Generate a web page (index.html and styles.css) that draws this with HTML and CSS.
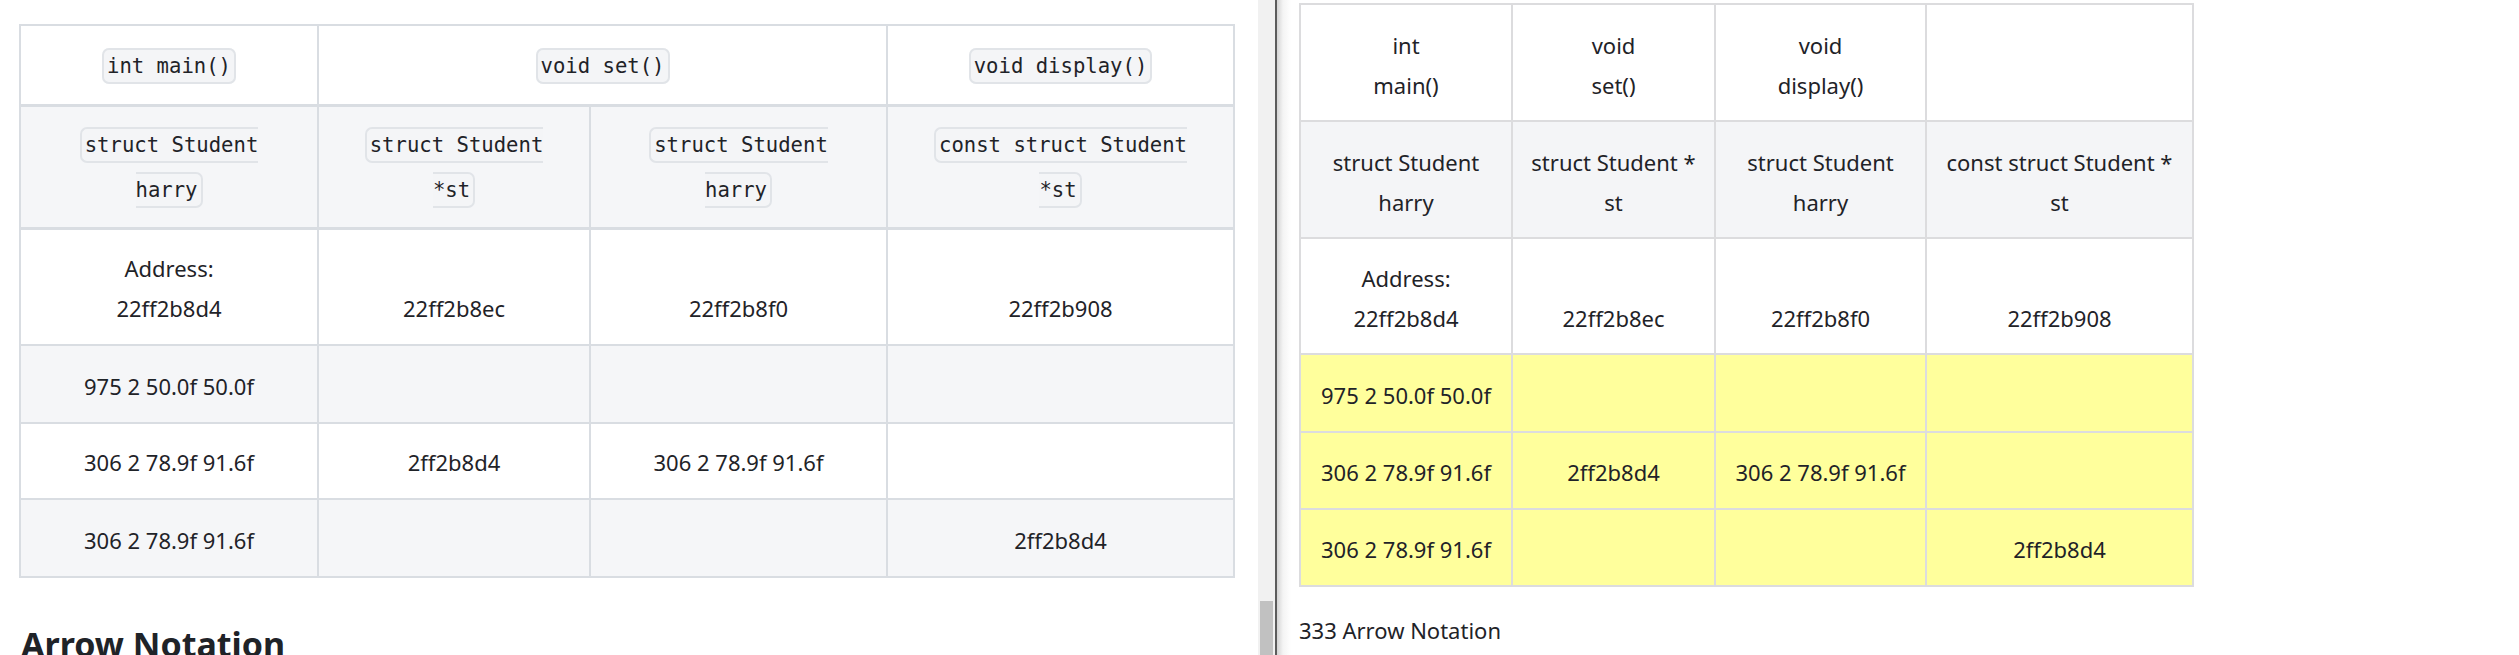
FILE: index.html
```html
<!DOCTYPE html>
<html lang="en">
<head>
<meta charset="utf-8">
<title>Arrow Notation</title>
<link rel="stylesheet" href="styles.css">
</head>
<body>
<div class="app">
  <section class="pane pane-left">
    <table class="md-table">
      <colgroup>
        <col class="lc1"><col class="lc2"><col class="lc3"><col class="lc4">
      </colgroup>
      <tr class="head1">
        <td><code>int main()</code></td>
        <td colspan="2"><code>void set()</code></td>
        <td><code>void display()</code></td>
      </tr>
      <tr class="head2">
        <td><code>struct Student<br>harry</code></td>
        <td><code>struct Student<br>*st</code></td>
        <td><code>struct Student<br>harry</code></td>
        <td><code>const struct Student<br>*st</code></td>
      </tr>
      <tr class="addr">
        <td>Address:<br>22ff2b8d4</td>
        <td>22ff2b8ec</td>
        <td>22ff2b8f0</td>
        <td>22ff2b908</td>
      </tr>
      <tr class="r78">
        <td>975 2 50.0f 50.0f</td>
        <td></td>
        <td></td>
        <td></td>
      </tr>
      <tr class="r76">
        <td>306 2 78.9f 91.6f</td>
        <td>2ff2b8d4</td>
        <td>306 2 78.9f 91.6f</td>
        <td></td>
      </tr>
      <tr class="r78">
        <td>306 2 78.9f 91.6f</td>
        <td></td>
        <td></td>
        <td>2ff2b8d4</td>
      </tr>
    </table>
    <h2 class="heading">Arrow Notation</h2>
  </section>

  <div class="scrollbar"><div class="thumb"></div></div>
  <div class="divider"></div>

  <section class="pane pane-right">
    <table class="out-table">
      <colgroup>
        <col class="rc1"><col class="rc2"><col class="rc3"><col class="rc4">
      </colgroup>
      <tr class="two">
        <td>int<br>main()</td>
        <td>void<br>set()</td>
        <td>void<br>display()</td>
        <td></td>
      </tr>
      <tr class="two alt">
        <td>struct Student<br>harry</td>
        <td>struct Student *<br>st</td>
        <td>struct Student<br>harry</td>
        <td>const struct Student *<br>st</td>
      </tr>
      <tr class="two-b">
        <td>Address:<br>22ff2b8d4</td>
        <td>22ff2b8ec</td>
        <td>22ff2b8f0</td>
        <td>22ff2b908</td>
      </tr>
      <tr class="one hl">
        <td>975 2 50.0f 50.0f</td>
        <td></td>
        <td></td>
        <td></td>
      </tr>
      <tr class="one-b hl">
        <td>306 2 78.9f 91.6f</td>
        <td>2ff2b8d4</td>
        <td>306 2 78.9f 91.6f</td>
        <td></td>
      </tr>
      <tr class="one-b hl">
        <td>306 2 78.9f 91.6f</td>
        <td></td>
        <td></td>
        <td>2ff2b8d4</td>
      </tr>
    </table>
    <p class="caption">333 Arrow Notation</p>
  </section>
</div>
</body>
</html>
```

FILE: styles.css
```css
* { box-sizing: border-box; }

html, body {
  margin: 0;
  padding: 0;
  background: #ffffff;
}

body {
  font-family: "Noto Sans", "Open Sans", sans-serif;
  font-size: 22px;
  color: #1f2328;
}

.app {
  display: flex;
  width: 2519px;
  height: 655px;
  overflow: hidden;
}

.pane {
  height: 655px;
  overflow: hidden;
}

.pane-left {
  flex: 0 0 1258px;
  padding: 24px 25px 0 19px;
}

.scrollbar {
  flex: 0 0 17px;
  background: #f1f1f1;
  display: flex;
  flex-direction: column;
  justify-content: flex-end;
  padding-left: 2px;
  padding-right: 2px;
}

.thumb {
  height: 54px;
  background: #c1c1c1;
}

.divider {
  flex: 0 0 2px;
  background: #5c5c5c;
}

.pane-right {
  flex: 1 1 auto;
  padding: 3px 0 0 22px;
  background: linear-gradient(to right, #d4d4d4 0, #f4f4f4 6px, #ffffff 14px);
}

/* ---------- left: markdown table ---------- */
.md-table {
  width: 1214px;
  table-layout: fixed;
  border-collapse: collapse;
  border-spacing: 0;
}

.lc1 { width: 298px; }
.lc2 { width: 272px; }
.lc3 { width: 297px; }
.lc4 { width: 347px; }

.md-table td {
  border: 2px solid #d9dde2;
  padding: 0 19px 16px;
  line-height: 40px;
  text-align: center;
  vertical-align: bottom;
  background: #ffffff;
}

.md-table tr:nth-child(2n) td {
  background: #f5f6f8;
}

.md-table .head1 { height: 80px; }
.md-table .head2 { height: 123px; }
.md-table .addr { height: 117px; }
.md-table .r78 { height: 78px; }
.md-table .r76 { height: 76px; }

.md-table .head1 td,
.md-table .head2 td {
  border-bottom-width: 3px;
  vertical-align: middle;
  padding: 0 19px;
}

.md-table .head2 td {
  line-height: 43px;
}

.md-table code {
  font-family: "DejaVu Sans Mono", "Liberation Mono", monospace;
  font-size: 20.6px;
  padding: 4px 3px;
  border: 2px solid #e1e4e8;
  border-radius: 7px;
  background: #f4f5f7;
  color: #1f2328;
}

.heading {
  margin: 44px 0 0 2px;
  font-size: 34px;
  line-height: 45px;
  font-weight: 700;
  color: #1f2328;
}

/* ---------- right: rendered output table ---------- */
.out-table {
  width: 893px;
  table-layout: fixed;
  border-collapse: collapse;
  border-spacing: 0;
}

.rc1 { width: 212px; }
.rc2 { width: 203px; }
.rc3 { width: 211px; }
.rc4 { width: 267px; }

.out-table td {
  border: 2px solid #dcdcde;
  padding: 0 8px 15px;
  line-height: 40px;
  text-align: center;
  vertical-align: bottom;
  white-space: nowrap;
  background: #ffffff;
}

.out-table .two { height: 117px; }
.out-table .two-b { height: 116px; }
.out-table .one { height: 78px; }
.out-table .one-b { height: 77px; }

.out-table .alt td {
  background: #f4f5f7;
}

.out-table .hl td {
  background: #ffff9c;
  padding-bottom: 16px;
}

.caption {
  margin: 23px 0 0 0;
  line-height: 40px;
}
```
